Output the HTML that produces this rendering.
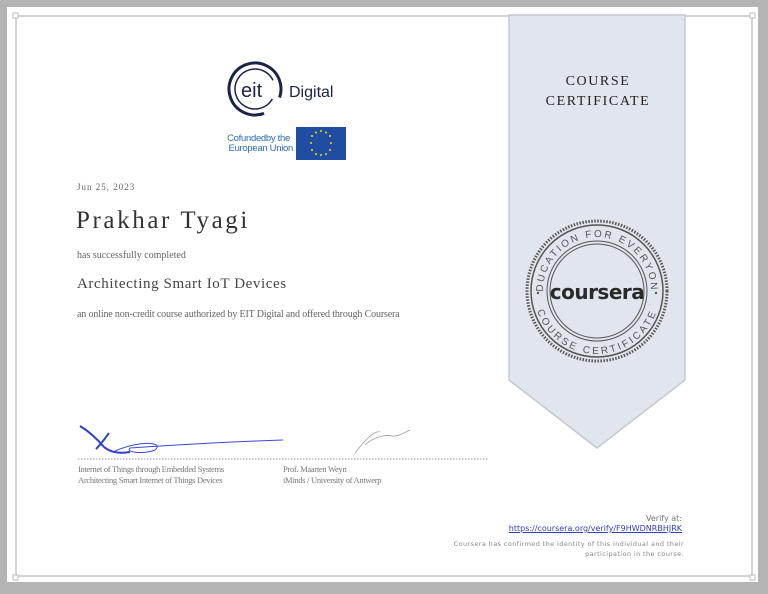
<!DOCTYPE html>
<html><head><meta charset="utf-8"><style>
*{margin:0;padding:0;box-sizing:border-box}
body{width:768px;height:594px;background:#b4b4b4;position:relative;overflow:hidden;font-family:"Liberation Serif",serif}
.page{position:absolute;left:7px;top:7px;width:751px;height:575px;background:#fff}
.frame{position:absolute;left:15px;top:15px;width:738px;height:562px;border:2px solid #d4d4d4}
.t{position:absolute;white-space:nowrap}
</style></head><body>
<div class="page"></div>
<div class="frame"></div>
<svg class="t" style="left:0;top:0" width="768" height="594">
 <rect x="13" y="13" width="5" height="5" fill="#fff" stroke="#bbb" stroke-width="1"/>
 <rect x="750" y="13" width="5" height="5" fill="#fff" stroke="#bbb" stroke-width="1"/>
 <rect x="750" y="575" width="5" height="5" fill="#fff" stroke="#bbb" stroke-width="1"/>
 <rect x="13" y="575" width="5" height="5" fill="#fff" stroke="#bbb" stroke-width="1"/>
 <polygon points="509,15 685,15 685,380 597,448 509,380" fill="#e1e5ed" stroke="#c5c8cf" stroke-width="1.5"/>
 <circle cx="597" cy="291" r="70" fill="none" stroke="#555" stroke-width="3" stroke-dasharray="1.5 1.5"/>
 <circle cx="597" cy="291" r="66" fill="none" stroke="#555" stroke-width="1.5"/>
 <circle cx="597" cy="291" r="50" fill="none" stroke="#555" stroke-width="1"/>
 <circle cx="597" cy="291" r="47" fill="none" stroke="#555" stroke-width="1"/>
 <defs>
  <path id="top" d="M543,291 A54,54 0 0,1 651,291"/>
  <path id="bot" d="M534,291 A63,63 0 0,0 660,291"/>
 </defs>
 <text font-family="Liberation Sans" font-size="10" fill="#555" letter-spacing="2.2" text-anchor="middle"><textPath href="#top" startOffset="50%">EDUCATION FOR EVERYONE</textPath></text>
 <text font-family="Liberation Sans" font-size="10" fill="#555" letter-spacing="2.6" text-anchor="middle"><textPath href="#bot" startOffset="50%">COURSE CERTIFICATE</textPath></text>
 <circle cx="538" cy="293" r="1.2" fill="#555"/>
 <circle cx="656" cy="293" r="1.2" fill="#555"/>
 <text x="597" y="299" text-anchor="middle" font-family="DejaVu Sans" font-weight="bold" font-size="20" fill="#2a2a2a" letter-spacing="-0.5">coursera</text>
 <!-- EIT logo -->
 <circle cx="255" cy="89" r="26" fill="none" stroke="#1b2346" stroke-width="3" stroke-dasharray="140 23" transform="rotate(70 255 89)"/>
 <circle cx="255" cy="89" r="20" fill="none" stroke="#1b2346" stroke-width="1.5" stroke-dasharray="106 20" transform="rotate(30 255 89)"/>
 <text x="241" y="97" font-family="Liberation Sans" font-size="20" fill="#1b2346">eit</text>
 <text x="289" y="97" font-family="Liberation Sans" font-size="16" fill="#1b2346">Digital</text>
 <text x="290" y="141" text-anchor="end" font-family="Liberation Sans" font-size="9.5" fill="#2a6bb5" letter-spacing="-0.3">Cofundedby the</text>
 <text x="293" y="151" text-anchor="end" font-family="Liberation Sans" font-size="9.5" fill="#2a6bb5" letter-spacing="-0.3">European Union</text>
 <rect x="296" y="127" width="50" height="33" fill="#1e4da1"/>
 <g fill="#f5d90a">
  <circle cx="321" cy="131" r="1"/><circle cx="326" cy="132.5" r="1"/><circle cx="330" cy="136" r="1"/><circle cx="331" cy="143" r="1"/><circle cx="330" cy="150" r="1"/><circle cx="326" cy="154" r="1"/><circle cx="321" cy="155" r="1"/><circle cx="316" cy="154" r="1"/><circle cx="312" cy="150" r="1"/><circle cx="311" cy="143" r="1"/><circle cx="312" cy="136" r="1"/><circle cx="316" cy="132.5" r="1"/>
 </g>
 <path d="M80,426 C90,432 98,440 104,447 M96,449 C102,443 106,437 109,433 M104,447 C110,452 118,454 130,452" fill="none" stroke="#2f3fc4" stroke-width="2"/>
 <path d="M115,451 C140,440 165,442 155,450 C145,454 125,453 130,448 C160,446 220,442 283,440" fill="none" stroke="#3a4ad0" stroke-width="1"/>
 <path d="M355,453 C365,440 375,430 380,432 M365,445 C372,438 385,434 392,436 C398,437 405,432 410,430" fill="none" stroke="#999" stroke-width="0.8"/>
 <line x1="78" y1="459" x2="488" y2="459" stroke="#999" stroke-width="1" stroke-dasharray="1.5 1.5"/>
</svg>
<div class="t" style="left:538px;top:72px;font-size:14px;letter-spacing:1.6px;color:#222;text-align:center;width:120px;line-height:20px">COURSE<br>CERTIFICATE</div>
<div class="t" style="left:77px;top:182px;font-size:9px;letter-spacing:1px;color:#666">Jun 25, 2023</div>
<div class="t" style="left:76px;top:207px;font-size:25px;letter-spacing:2.6px;color:#333">Prakhar Tyagi</div>
<div class="t" style="left:77px;top:250px;font-size:10px;color:#666">has successfully completed</div>
<div class="t" style="left:77px;top:276px;font-size:15px;letter-spacing:0.6px;color:#444">Architecting Smart IoT Devices</div>
<div class="t" style="left:77px;top:309px;font-size:10px;color:#666;letter-spacing:-0.15px">an online non-credit course authorized by EIT Digital and offered through Coursera</div>
<div class="t" style="left:78px;top:464px;font-size:8.5px;color:#777;line-height:11px;letter-spacing:-0.3px">Internet of Things through Embedded Systems<br>Architecting Smart Internet of Things Devices</div>
<div class="t" style="left:283px;top:464px;font-size:8.5px;color:#777;line-height:11px;letter-spacing:-0.3px">Prof. Maarten Weyn<br>iMinds / University of Antwerp</div>
<div class="t" style="right:86px;top:514px;font-family:'DejaVu Sans',sans-serif;font-size:8px;color:#777;text-align:right;line-height:10px">Verify at:<br><span style="color:#3340c0;text-decoration:underline">https://coursera.org/verify/F9HWDNRBHJRK</span></div>
<div class="t" style="right:84px;top:539px;font-family:'DejaVu Sans',sans-serif;font-size:6.5px;color:#888;text-align:right;line-height:10px;letter-spacing:0.4px">Coursera has confirmed the identity of this individual and their<br>participation in the course.</div>
</body></html>
